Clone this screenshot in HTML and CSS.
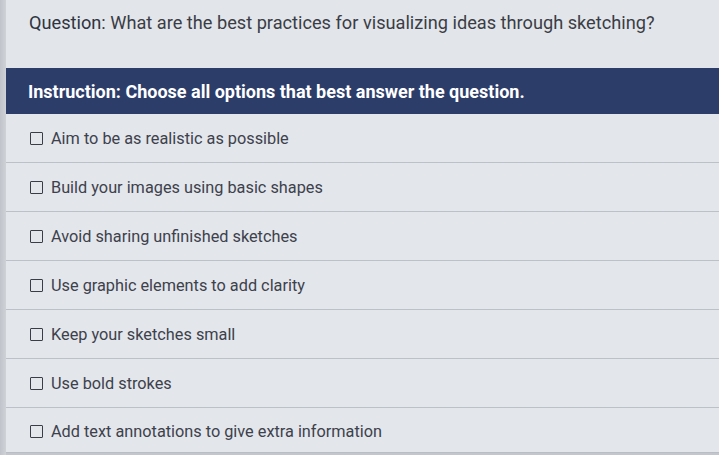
FILE: index.html
```html
<!DOCTYPE html>
<html>
<head>
<meta charset="utf-8">
<link rel="stylesheet" href="styles.css">
</head>
<body>
<div class="frame">
  <div class="edge"></div>
  <div class="panel">
    <div class="question"><span class="qlabel">Question</span>: What are the best practices for visualizing ideas through sketching?</div>
    <div class="instruction">Instruction: Choose all options that best answer the question.</div>
    <ul class="options">
      <li class="option"><span class="box"></span><span class="label">Aim to be as realistic as possible</span></li>
      <li class="option"><span class="box"></span><span class="label">Build your images using basic shapes</span></li>
      <li class="option"><span class="box"></span><span class="label">Avoid sharing unfinished sketches</span></li>
      <li class="option"><span class="box"></span><span class="label">Use graphic elements to add clarity</span></li>
      <li class="option"><span class="box"></span><span class="label">Keep your sketches small</span></li>
      <li class="option"><span class="box"></span><span class="label">Use bold strokes</span></li>
      <li class="option"><span class="box"></span><span class="label">Add text annotations to give extra information</span></li>
    </ul>
  </div>
</div>
</body>
</html>
```
FILE: styles.css
```css
html, body {
  margin: 0;
  padding: 0;
  background: #e5e7eb;
  font-family: Roboto, "Liberation Sans", sans-serif;
}
.frame {
  display: flex;
  width: 719px;
  height: 455px;
  overflow: hidden;
  background: #c3c6cc;
}
.edge {
  width: 6px;
  flex: none;
  background: linear-gradient(to right, #c0c3c9, #cfd2d7);
}
.panel {
  flex: 1;
  background: #e3e6eb;
  display: flex;
  flex-direction: column;
  height: 452px;
  overflow: hidden;
  border-bottom: 1px solid #b9bdc4;
}
.question {
  flex: none;
  height: 68px;
  padding: 12px 0 0 23px;
  box-sizing: border-box;
  font-size: 18.2px;
  color: #3a3d45;
  background: #e2e5ea;
}
.qlabel {
  color: #2f3440;
}
.instruction {
  flex: none;
  height: 46px;
  background: #2c3d6a;
  color: #ffffff;
  font-weight: 700;
  font-size: 18px;
  padding-left: 22px;
  display: flex;
  align-items: center;
}
.options {
  flex: none;
  list-style: none;
  margin: 0;
  padding: 0;
}
.option {
  height: 48px;
  border-bottom: 1px solid #bcc0c7;
  display: flex;
  align-items: center;
  padding-left: 24px;
  font-size: 16.3px;
  color: #3d414b;
}
.option:last-child {
  border-bottom: none;
  height: 46px;
}
.box {
  width: 11px;
  height: 11px;
  border: 1.5px solid #3a3d45;
  border-radius: 1px;
  margin-right: 8px;
  flex: none;
}
```
